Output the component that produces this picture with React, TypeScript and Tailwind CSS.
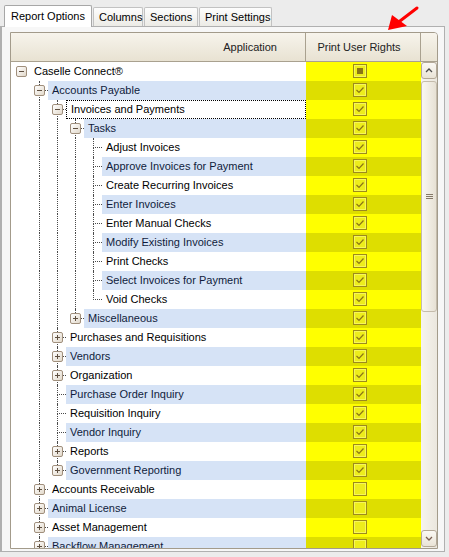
type Kind = "minus" | "plus" | "leaf";
type Check = "mixed" | "on" | "off";

interface Row {
  label: string;
  level: number;
  kind: Kind;
  check: Check;
}

const rows: Row[] = [
  { label: "Caselle Connect®", level: 0, kind: "minus", check: "mixed" },
  { label: "Accounts Payable", level: 1, kind: "minus", check: "on" },
  { label: "Invoices and Payments", level: 2, kind: "minus", check: "on" },
  { label: "Tasks", level: 3, kind: "minus", check: "on" },
  { label: "Adjust Invoices", level: 4, kind: "leaf", check: "on" },
  { label: "Approve Invoices for Payment", level: 4, kind: "leaf", check: "on" },
  { label: "Create Recurring Invoices", level: 4, kind: "leaf", check: "on" },
  { label: "Enter Invoices", level: 4, kind: "leaf", check: "on" },
  { label: "Enter Manual Checks", level: 4, kind: "leaf", check: "on" },
  { label: "Modify Existing Invoices", level: 4, kind: "leaf", check: "on" },
  { label: "Print Checks", level: 4, kind: "leaf", check: "on" },
  { label: "Select Invoices for Payment", level: 4, kind: "leaf", check: "on" },
  { label: "Void Checks", level: 4, kind: "leaf", check: "on" },
  { label: "Miscellaneous", level: 3, kind: "plus", check: "on" },
  { label: "Purchases and Requisitions", level: 2, kind: "plus", check: "on" },
  { label: "Vendors", level: 2, kind: "plus", check: "on" },
  { label: "Organization", level: 2, kind: "plus", check: "on" },
  { label: "Purchase Order Inquiry", level: 2, kind: "leaf", check: "on" },
  { label: "Requisition Inquiry", level: 2, kind: "leaf", check: "on" },
  { label: "Vendor Inquiry", level: 2, kind: "leaf", check: "on" },
  { label: "Reports", level: 2, kind: "plus", check: "on" },
  { label: "Government Reporting", level: 2, kind: "plus", check: "on" },
  { label: "Accounts Receivable", level: 1, kind: "plus", check: "off" },
  { label: "Animal License", level: 1, kind: "plus", check: "off" },
  { label: "Asset Management", level: 1, kind: "plus", check: "off" },
  { label: "Backflow Management", level: 1, kind: "plus", check: "off" },
];

// does a line at level k keep going below row i?
const continues = (i: number, k: number) => {
  for (let j = i + 1; j < rows.length; j++) {
    if (rows[j].level <= k) return rows[j].level === k;
  }
  return k <= 1;
};

const Expander = ({ kind }: { kind: Kind }) => (
  <div className="w-[11px] h-[11px] border border-[#a08f7c] rounded-[2px] bg-gradient-to-br from-[#ffffff] to-[#e2d9cb] flex items-center justify-center">
    <svg width="7" height="7" viewBox="0 0 7 7">
      <path d="M1 3.5H6" stroke="#5e4f40" strokeWidth="1" />
      {kind === "plus" && <path d="M3.5 1V6" stroke="#5e4f40" strokeWidth="1" />}
    </svg>
  </div>
);

const CheckBox = ({ state }: { state: Check }) => (
  <svg width="14" height="14" viewBox="0 0 14 14">
    <rect x="0.5" y="0.5" width="13" height="13" fill="#eded1c" stroke="#9c8a1c" />
    <rect x="1.5" y="1.5" width="11" height="11" fill="none" stroke="#f7f75a" />
    {state === "on" && (
      <path d="M3.5 7L6 9.5L10.5 4.5" fill="none" stroke="#8a7416" strokeWidth="1.2" />
    )}
    {state === "mixed" && <rect x="4" y="4" width="6" height="6" fill="#8a7416" />}
  </svg>
);

const TreeRow = ({ row, i }: { row: Row; i: number }) => {
  const L = row.level;
  const odd = i % 2 === 1;
  const indent = 19 + 18 * L;
  const lines = [];
  for (let k = 1; k < L; k++) {
    if (continues(i, k))
      lines.push(
        <div key={k} className="absolute top-0 bottom-0 border-l border-dotted border-[#4a4a4a]" style={{ left: 10 + 18 * k }} />
      );
  }
  return (
    <div className="flex h-[19px] shrink-0">
      <div className="relative w-[295px] flex">
        {lines}
        {L > 0 && (
          <div className="absolute top-0 h-[10px] border-l border-dotted border-[#4a4a4a]" style={{ left: 10 + 18 * L }} />
        )}
        {L > 0 && continues(i, L) && (
          <div className="absolute top-[10px] bottom-0 border-l border-dotted border-[#4a4a4a]" style={{ left: 10 + 18 * L }} />
        )}
        {L > 0 && (
          <div className="absolute top-[9px] w-[9px] border-t border-dotted border-[#4a4a4a]" style={{ left: 10 + 18 * L }} />
        )}
        {row.kind !== "leaf" && (
          <div className="absolute top-[4px]" style={{ left: 5 + 18 * L }}>
            <Expander kind={row.kind} />
          </div>
        )}
        <div className="shrink-0" style={{ width: indent }} />
        <div
          className={`flex-1 flex items-center pl-[4px] whitespace-nowrap ${
            odd ? "bg-[#d6e3f6] text-[#101c3c]" : "text-black"
          } ${i === 2 ? "border border-dotted border-black pl-[3px]" : ""}`}
        >
          {row.label}
        </div>
      </div>
      <div className={`w-[115px] pl-[47px] pt-[2px] ${odd ? "bg-[#dede00]" : "bg-[#ffff00]"}`}>
        <CheckBox state={row.check} />
      </div>
    </div>
  );
};

const ScrollButton = ({ up }: { up: boolean }) => (
  <div className="h-[17px] w-[16px] border border-[#b3a897] rounded-[3px] bg-gradient-to-b from-[#fbf9f4] to-[#e9e3d6] flex items-center justify-center">
    <svg width="8" height="5" viewBox="0 0 8 5">
      <path d={up ? "M1 4L4 1L7 4" : "M1 1L4 4L7 1"} fill="none" stroke={up ? "#4d4d4d" : "#7a5f52"} strokeWidth="1.3" />
    </svg>
  </div>
);

const tabs = [
  { label: "Report Options", w: "w-[88px]", active: true },
  { label: "Columns", w: "w-[50px]", active: false },
  { label: "Sections", w: "w-[54px]", active: false },
  { label: "Print Settings", w: "w-[73px]", active: false },
];

export default function App() {
  return (
    <div
      className="relative w-[449px] h-[557px] overflow-hidden bg-[#ececec] text-[11px] flex flex-col"
      style={{ fontFamily: '"Liberation Sans", Arial, sans-serif' }}
    >
      <div className="flex items-end h-[21px] mt-[5px] pl-[4px] relative z-10">
        {tabs.map((t) =>
          t.active ? (
            <div
              key={t.label}
              className={`${t.w} h-[22px] -mb-px bg-white border border-b-0 border-[#a7a7a7] rounded-t-[2px] pl-[6px] flex items-center text-black`}
            >
              {t.label}
            </div>
          ) : (
            <div
              key={t.label}
              className={`${t.w} h-[19px] ml-[1px] bg-gradient-to-b from-[#fdfdfd] to-[#ecebe6] border border-b-0 border-[#c2c2c2] rounded-t-[2px] pl-[5px] flex items-center text-black`}
            >
              {t.label}
            </div>
          )
        )}
      </div>

      <div className="w-[445px] h-[526px] bg-[#f7f7f7] border-l-2 border-r border-t border-b border-[#b0b0b0] pl-[8px] pt-[5px]">
        <div className="w-[428px] h-[517px] border border-[#a39b8b] rounded-tr-[4px] bg-white flex flex-col overflow-hidden">
          <div className="flex h-[29px] shrink-0 border-b border-[#a9a18f] bg-gradient-to-b from-[#f7f4ec] to-[#e8e2d2] text-[#222]">
            <div className="w-[295px] border-r border-[#a9a18f] flex items-center justify-end pr-[28px]">Application</div>
            <div className="w-[115px] border-r border-[#a9a18f] flex items-center justify-center pr-[8px]">Print User Rights</div>
            <div className="flex-1" />
          </div>
          <div className="flex flex-1 min-h-0">
            <div className="w-[410px] flex flex-col overflow-hidden">
              {rows.map((r, i) => (
                <TreeRow key={r.label} row={r} i={i} />
              ))}
            </div>
            <div className="w-[16px] flex flex-col bg-gradient-to-r from-[#f6f4ef] to-[#ebe7de]">
              <ScrollButton up />
              <div className="mt-[2px] h-[231px] border border-[#c4bbab] rounded-[3px] bg-gradient-to-r from-[#f9f7f2] to-[#e7e1d4] flex items-center justify-center">
                <svg width="7" height="5" viewBox="0 0 7 5">
                  <path d="M0 0.5H7M0 2.5H7M0 4.5H7" stroke="#857868" strokeWidth="1" />
                </svg>
              </div>
              <div className="flex-1" />
              <div className="mb-[1px]">
                <ScrollButton up={false} />
              </div>
            </div>
          </div>
        </div>
      </div>

      <svg className="absolute left-[380px] top-0" width="50" height="40" viewBox="0 0 50 40">
        <path d="M37 8L20 21" stroke="#ff0000" strokeWidth="3" strokeLinecap="round" />
        <polygon points="8,30 12,15 27,26" fill="#ff0000" />
      </svg>
    </div>
  );
}
